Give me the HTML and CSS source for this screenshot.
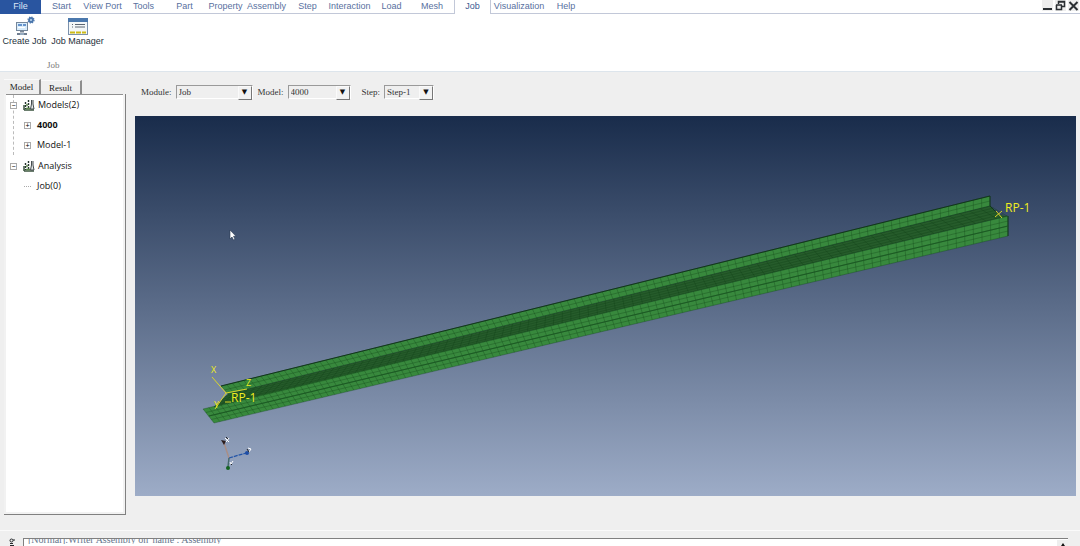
FILE: index.html
```html
<!DOCTYPE html>
<html lang="en">
<head>
<meta charset="utf-8">
<title>Job</title>
<link rel="stylesheet" href="styles.css">
</head>
<body>
<div class="app">
  <header class="menubar">
    <nav class="tabs">
      <button class="tab file">File</button>
      <button class="tab">Start</button>
      <button class="tab">View Port</button>
      <button class="tab">Tools</button>
      <button class="tab">Part</button>
      <button class="tab">Property</button>
      <button class="tab">Assembly</button>
      <button class="tab">Step</button>
      <button class="tab wide">Interaction</button>
      <button class="tab">Load</button>
      <button class="tab mesh-tab">Mesh</button>
      <button class="tab active">Job</button>
      <button class="tab visual">Visualization</button>
      <button class="tab help">Help</button>
    </nav>
    <div class="window-buttons">
      <button aria-label="Minimize"><svg width="11" height="11"><path d="M1 9h9" stroke="#2b2f33" stroke-width="2"/></svg></button>
      <button aria-label="Restore"><svg width="11" height="11" fill="none" stroke="#2b2f33"><path d="M3.500 4V1.500h6v5H7M3 2h7M1 5h6" stroke-width="1.500"/><path d="M1.500 5v4.500h5V5" stroke-width="1.500"/></svg></button>
      <button aria-label="Close"><svg width="11" height="11"><path d="M1.500 2l8 8M9.500 2l-8 8" stroke="#2b2f33" stroke-width="2"/></svg></button>
    </div>
  </header>

  <section class="ribbon">
    <div class="tools">
      <button class="tool">
        <svg width="22" height="20" viewBox="0 0 22 20">
          <rect x="2.500" y="6.500" width="11" height="8" fill="#d8ecfb" stroke="#75879b"/>
          <path d="M4 9h4M9 9h3" stroke="#3f75bd" stroke-width="1.500"/>
          <path d="M4 11.500h7" stroke="#fff"/>
          <path d="M6 15.500h4" stroke="#7a8797" stroke-width="2"/>
          <path d="M3 18h10" stroke="#6f7d90" stroke-width="2"/>
          <path d="M6 18h4" stroke="#bcd9ee"/>
          <circle cx="17" cy="4" r="2" fill="#b9d2ec" stroke="#4a76ad" stroke-width="1.800"/>
          <circle cx="17" cy="4" r="3" fill="none" stroke="#4a76ad" stroke-width="1.200" stroke-dasharray="1.200 1.150"/>
        </svg>
        <span>Create Job</span>
      </button>
      <button class="tool">
        <svg width="22" height="20" viewBox="0 0 22 20">
          <rect x="1.500" y="2.500" width="19" height="16" fill="#f4f7f8" stroke="#7b91ac"/>
          <path d="M1 4h20" stroke="#4b78ad" stroke-width="4"/>
          <path d="M8 8.500h10M8 11h10" stroke="#5c6672"/>
          <path d="M5 8.500h1M5 11h1" stroke="#5c6672"/>
          <path d="M3 16.500h5M9 16.500h5M15 16.500h4" stroke="#cdbb16" stroke-width="1.800"/>
        </svg>
        <span>Job Manager</span>
      </button>
    </div>
    <div class="group-name">Job</div>
  </section>

  <main class="workspace">
    <aside class="sidebar">
      <div class="side-tabs">
        <button class="side-tab current">Model</button>
        <button class="side-tab">Result</button>
      </div>
      <div class="tree-frame">
        <ul class="tree">
          <li>
            <div class="node"><button class="twist" aria-label="Collapse">−</button><svg class="kit" width="12" height="12"><use href="#kit"/></svg><span>Models(2)</span></div>
            <ul>
              <li><div class="node"><button class="twist" aria-label="Expand">+</button><b>4000</b></div></li>
              <li><div class="node"><button class="twist" aria-label="Expand">+</button><span>Model-1</span></div></li>
            </ul>
          </li>
          <li>
            <div class="node"><button class="twist" aria-label="Collapse">−</button><svg class="kit" width="12" height="12"><use href="#kit"/></svg><span>Analysis</span></div>
            <ul>
              <li><div class="node"><i class="branch"></i><span>Job(0)</span></div></li>
            </ul>
          </li>
        </ul>
      </div>
    </aside>

    <div class="stage">
      <form class="context">
        <label for="module">Module:</label>
        <span class="pick"><select id="module" class="w-module"><option>Job</option></select></span>
        <label for="model">Model:</label>
        <span class="pick"><select id="model" class="w-model"><option>4000</option></select></span>
        <label for="step" class="step-label">Step:</label>
        <span class="pick"><select id="step" class="w-step"><option>Step-1</option></select></span>
      </form>
      <div class="viewport">
        <svg class="scene" viewBox="135 116 941 380">
          <polygon class="flange" points="221,386 990,196 990,206 228,394"/>
          <polygon class="web" points="228,394 990,206 1000,215 1008,216 214,407"/>
          <polygon class="flange" points="203,409 1008,216 1008,236 214,423"/>
          <path id="mesh" class="mesh"/>
          <path class="edge" d="M221 386L990 196V206L999 215M1008 216V236"/>
          <path class="seam" d="M209 416L1008 226"/>
          <g class="marks">
            <path d="M212 377L226 393L247 389M226 393L215 409M225 402H231M996 211l6 7M1002 211l-7 6"/>
          </g>
          <g class="mark-text">
            <text class="axis" x="211" y="373">X</text>
            <text class="axis" x="246" y="386">Z</text>
            <text class="axis" x="214" y="408">Y</text>
            <text x="231" y="402">RP-1</text>
            <text x="1005" y="212">RP-1</text>
          </g>
          <g fill="none">
            <path d="M229 458L224 443" stroke="#a98f86" stroke-width="1.500"/>
            <path d="M229 458L246 453" stroke="#2355a8" stroke-width="1.300" stroke-dasharray="4 1"/>
            <path d="M229 458L228 467" stroke="#46696c" stroke-width="1.500"/>
          </g>
          <path d="M221 440l5 1l-2 4z" fill="#2a1c1c"/>
          <circle cx="247" cy="453" r="2" fill="#1e4da5"/>
          <circle cx="228" cy="468" r="2" fill="#136420"/>
          <path d="M225 438l4 4M229 438l-3 4M248 448l3 1l-2 3M230 462l1 2l2-3" stroke="#fff" fill="none"/>
          <path d="M226 437l2 2M247 449l2 3M231 465l1-1" stroke="#222" fill="none"/>
          <path d="M230 230v9l2-2l1.500 3l1.500-.7l-1.500-3h2.500z" fill="#fff" stroke="#26374f" stroke-width=".6"/>
        </svg>
      </div>
    </div>
  </main>

  <footer class="console">
    <svg width="8" height="8" fill="none" stroke="#25282b"><circle cx="3.500" cy="2.500" r="1.500"/><path d="M2 5.500h3M6 1v2M2 7.500h4"/></svg>
    <div class="log">
      <p class="line">[Normal]:Writer Assembly on 'name : Assembly</p>
      <button class="scroll-up" aria-label="Scroll up"></button>
    </div>
  </footer>
</div>

<svg width="0" height="0" class="defs">
  <symbol id="kit" viewBox="0 0 12 12">
    <path d="M1 6v5M1 11h10" stroke="#3c5540" stroke-width="1.500" fill="none"/>
    <path d="M2.500 3v7M5.500 1v9" stroke="#263630" stroke-width="1.400" stroke-dasharray="2 1"/>
    <path d="M3 9.500h4M3 6h2" stroke="#5f8a4e" stroke-width="1.300"/>
    <path d="M8.500 1v4l-1 5h3.500l-1-5V1" stroke="#454b4e" fill="#e4e9ea"/>
  </symbol>
</svg>
<script src="mesh.js"></script>
</body>
</html>
```
FILE: styles.css
```css
* { box-sizing: border-box; }
body { margin: 0; background: #efefef; font-family: "Liberation Sans", Arial, sans-serif; font-size: 9px; color: #222; }
button, select { font: inherit; color: inherit; margin: 0; padding: 0; border: 0; background: none; border-radius: 0; }
ul, p { margin: 0; padding: 0; list-style: none; }
.app { height: 100vh; display: flex; flex-direction: column; overflow: hidden; }
.defs { position: absolute; }

.menubar { display: flex; height: 14px; background: #fff; flex: none; }
.tabs { display: flex; flex: 1; border-bottom: 1px solid #c2c8d8; }
.tab { flex: 0 0 41px; height: 14px; line-height: 12px; padding-bottom: 2px; color: #5870a0; white-space: nowrap; text-align: center; }
.tab.file { background: #2955a0; color: #dbe6f7; }
.tab.wide { flex-basis: 43px; }
.tab.mesh-tab { flex-basis: 40px; margin-right: 2px; }
.tab.active { flex-basis: 37px; background: #fff; border: solid #c2c8d8; border-width: 0 1px; color: #3c5a92; }
.tab.visual { flex-basis: 56px; }
.tab.help { flex-basis: 38px; }
.window-buttons { display: flex; gap: 2px; padding-right: 1px; border-bottom: 1px solid #c2c8d8; }
.window-buttons button { width: 11px; height: 11px; background: #eee; }
.window-buttons svg { display: block; }

.ribbon { flex: none; height: 58px; background: #fff; border-bottom: 1px solid #dde5ec; display: flex; flex-direction: column; justify-content: space-between; align-items: flex-start; }
.tools { display: flex; gap: 4px; padding-top: 2px; }
.tool { display: flex; flex-direction: column; align-items: center; width: 49px; line-height: 10px; white-space: nowrap; color: #26323c; }
.tool svg { display: block; }
.group-name { padding: 0 0 1px 47px; font: 9px/10px "Liberation Serif", serif; color: #7b7b7b; }

.workspace { flex: 1; display: flex; min-height: 0; }
.sidebar { flex: 0 0 126px; display: flex; flex-direction: column; padding: 6px 0 0 4px; }
.side-tabs { display: flex; font: 9px/14px "Liberation Serif", serif; height: 16px; padding-top: 1px; }
.side-tab { width: 37px; border-top: 1px solid #fafafa; border-right: 2px solid #8d8d8d; }
.side-tab + .side-tab { width: 41px; margin-top: 1px; }
.tree-frame { flex: 1; border: solid #808080; border-width: 0 1px 1px 0; padding: 0 2px 2px; background: #f2f2f2; }
.tree { height: 100%; background: #fff; border-top: 1px solid #909090; font: 9px/20px "Open Sans", "Noto Sans", sans-serif; color: #111; padding-left: 4px; display: flex; flex-direction: column; gap: 1px; }
.tree > li { position: relative; }
.tree > li:first-child::before { content: ""; position: absolute; left: 3px; top: 0; bottom: 0; border-left: 1px dashed #bbb; }
.tree ul { padding-left: 14px; }
.node { position: relative; display: flex; align-items: center; gap: 6px; height: 20px; }
.node .kit { margin-right: -3px; }
.twist { width: 7px; height: 7px; border: 1px solid #aaa; background: #fff; font: 7px/5px "Liberation Sans", sans-serif; color: #000; }
.branch { width: 7px; border-top: 1px dotted #aaa; }

.stage { flex: 1; min-width: 0; display: flex; flex-direction: column; padding-left: 9px; }
.context { display: flex; align-items: center; height: 44px; padding: 0 0 4px 6px; font: 9px/12px "Liberation Serif", serif; color: #333; }
.context label { margin-right: 4px; }
.step-label { margin-left: 6px; }
.pick { position: relative; display: flex; border: 1px solid; border-color: #9a9a9a #fff #fff #9a9a9a; margin-right: 5px; }
.pick select { appearance: none; height: 12px; padding-left: 2px; }
.pick::after { content: "▼"; position: absolute; right: 0; top: 0; width: 12px; height: 12px; border: 1px solid; border-color: #fafafa #777 #777 #fafafa; font: 7px/10px "DejaVu Sans", sans-serif; color: #111; text-align: center; background: #f2f2f2; pointer-events: none; }
.w-module { width: 75px; }
.w-model { width: 61px; }
.w-step { width: 48px; }
.viewport { flex: 1; min-height: 0; margin: 0 4px 19px 0; background: linear-gradient(#192c4b, #9dacc7); }
.scene { display: block; width: 100%; height: 100%; }
.flange { fill: #38893d; }
.web { fill: #265c2b; }
.mesh { fill: none; stroke: #0c3e13; stroke-width: .5; opacity: .6; }
.edge { fill: none; stroke: #12361c; stroke-width: 1; }
.seam { stroke: #1c5a24; stroke-width: 1; }
.marks { fill: none; stroke: #d9d52b; stroke-width: 1; }
.mark-text { fill: #f0ed20; font: 12px "Open Sans", "Noto Sans", sans-serif; }
.axis { font-size: 9px; }

.console { flex: none; height: 31px; display: flex; align-items: flex-end; gap: 7px; padding: 0 12px 0 8px; background: linear-gradient(#fafafa, #fafafa) 0 15px / 100% 1px no-repeat; }
.log { flex: 1; height: 8px; display: flex; border: solid #808080; border-width: 1px 0 0 1px; background: #fff; overflow: hidden; }
.line { flex: 1; height: 5px; display: flex; align-items: flex-end; padding-left: 4px; font: 10px/9px "Liberation Serif", serif; color: #65758c; overflow: hidden; }
.scroll-up { align-self: flex-end; width: 11px; height: 6px; background: #eee; position: relative; }
.scroll-up::after { content: ""; position: absolute; left: 4px; top: 3px; border: solid transparent; border-width: 0 2px 3px; border-bottom-color: #111; }
```
FILE: mesh.js
```javascript
// Each strip lists its left edge (top, bottom) and its right edge (top, bottom).
const strips = [
  { left: [[221, 386], [228, 394]], right: [[990, 196], [990, 206]], rows: 2, columns: 110 },
  { left: [[228, 394], [214, 407]], right: [[990, 206], [1007, 216]], rows: 5, columns: 90 },
  { left: [[203, 409], [214, 423]], right: [[1008, 216], [1008, 236]], rows: 4, columns: 110 }
];
const mix = (a, b, t) => [a[0] + (b[0] - a[0]) * t, a[1] + (b[1] - a[1]) * t];
const line = (a, b) => `M${a.map(v => v.toFixed(1))}L${b.map(v => v.toFixed(1))}`;
let d = "";
for (const { left, right, rows, columns } of strips) {
  for (let r = 0; r <= rows; r++) {
    d += line(mix(...left, r / rows), mix(...right, r / rows));
  }
  for (let c = 0; c <= columns; c++) {
    const u = c / columns;
    const t = u * (0.8 + 0.2 * u);
    d += line(mix(left[0], right[0], t), mix(left[1], right[1], t));
  }
}
document.getElementById("mesh").setAttribute("d", d);
```
